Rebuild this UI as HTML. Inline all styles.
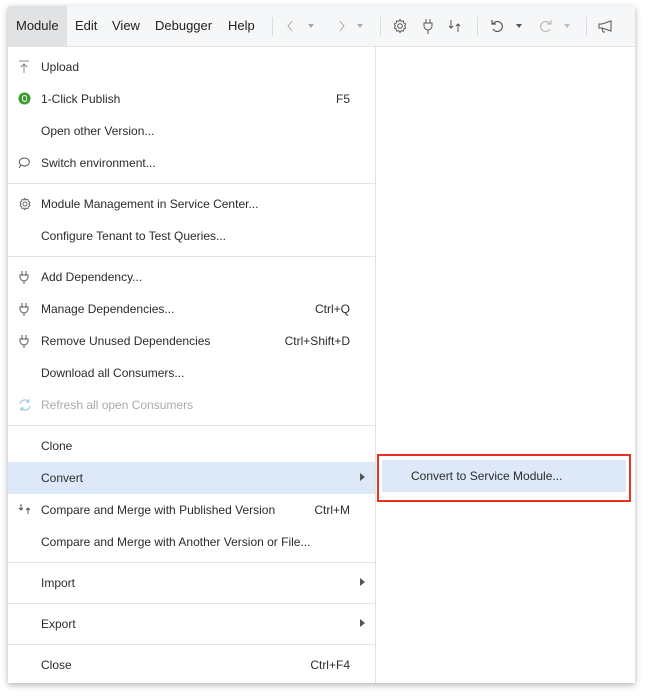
<!DOCTYPE html>
<html><head><style>
body{margin:0;width:650px;height:698px;background:#fff;font-family:"Liberation Sans",sans-serif;font-size:12px;color:#2b2b2b;position:relative;overflow:hidden}
.win{position:absolute;left:8px;top:6px;width:627px;height:677px;background:#fff;box-shadow:0 2px 6px rgba(0,0,0,.3)}
.bar{position:absolute;left:0;top:0;width:627px;height:40px;background:#f6f7f8;border-bottom:1px solid #e4e4e4}
.bar span{position:absolute;top:12px;font-size:13px;color:#222}
.mod{position:absolute;left:0;top:0;width:59px;height:40px;background:#e1e2e4}
.ic{position:absolute;color:#666;font-size:13px}
.vs{position:absolute;top:11px;width:1px;height:19px;background:#dcdcdc}
.menu{position:absolute;left:0;top:41px;width:367px;height:636px;border-right:1px solid #e2e2e2}
.r{position:absolute;left:0;width:367px;height:32px}
.r .t{position:absolute;left:33px;top:9px}
.r .k{position:absolute;right:25px;top:9px}
.r .a{position:absolute;right:10px;top:11px;width:0;height:0;border-left:5px solid #555;border-top:4px solid transparent;border-bottom:4px solid transparent}
.r svg{position:absolute;left:10px;top:9px}
.sep{position:absolute;left:0;width:367px;height:1px;background:#e3e3e3}
.hl{background:#dde9f8}
svg.b{position:absolute}
</style></head><body>
<div class="win">
<div class="bar">
<div class="mod"></div>
<span style="left:8px">Module</span><span style="left:67px">Edit</span><span style="left:104px">View</span><span style="left:147px">Debugger</span><span style="left:220px">Help</span>
<div class="vs" style="left:264px"></div>
<svg class="b" style="left:278px;top:14px" width="8" height="12"><path d="M6 1L2 6l4 5" fill="none" stroke="#aaa"/></svg>
<svg class="b" style="left:300px;top:18px" width="7" height="4"><path d="M0 0h6L3 4z" fill="#aaa"/></svg>
<svg class="b" style="left:330px;top:14px" width="8" height="12"><path d="M2 1l4 5-4 5" fill="none" stroke="#aaa"/></svg>
<svg class="b" style="left:349px;top:18px" width="7" height="4"><path d="M0 0h6L3 4z" fill="#aaa"/></svg>
<div class="vs" style="left:372px"></div>
<svg class="b" style="left:384px;top:12px" width="16" height="16" viewBox="0 0 16 16"><circle cx="8" cy="8" r="2.3" fill="none" stroke="#555"/><path d="M8 1.5l1.2 1.8 2.1-.5.5 2.1 1.8 1.2-1 1.9 1 1.9-1.8 1.2-.5 2.1-2.1-.5L8 14.5l-1.2-1.8-2.1.5-.5-2.1L2.4 9.9l1-1.9-1-1.9 1.8-1.2.5-2.1 2.1.5z" fill="none" stroke="#555"/></svg>
<svg class="b" style="left:414px;top:12px" width="12" height="16"><path d="M4 1v4M8 1v4M2 5h8v3a4 4 0 0 1-8 0zM6 12v4" fill="none" stroke="#555"/></svg>
<svg class="b" style="left:440px;top:13px" width="14" height="14"><path d="M3 1v8M1 7l2 2 2-2M10 13V5M8 7l2-2 2 2" fill="none" stroke="#555"/></svg>
<div class="vs" style="left:469px"></div>
<svg class="b" style="left:481px;top:12px" width="16" height="16"><path d="M4 6a5 5 0 1 1 0 5M3 2v4h4" fill="none" stroke="#555" stroke-width="1.2"/></svg>
<svg class="b" style="left:508px;top:18px" width="7" height="4"><path d="M0 0h6L3 4z" fill="#555"/></svg>
<svg class="b" style="left:530px;top:12px" width="16" height="16"><path d="M12 6a5 5 0 1 0 0 5M13 2v4H9" fill="none" stroke="#bbb" stroke-width="1.2"/></svg>
<svg class="b" style="left:556px;top:18px" width="7" height="4"><path d="M0 0h6L3 4z" fill="#bbb"/></svg>
<div class="vs" style="left:578px"></div>
<svg class="b" style="left:590px;top:13px" width="16" height="14"><path d="M1 5h3l9-3v10l-9-3H1zM4 9l1 4h2" fill="none" stroke="#555"/></svg>
</div>
<div class="menu">
<div class="r" style="top:4px"><svg width="12" height="14"><path d="M1 1h10M6 13V4M3 7l3-3 3 3" fill="none" stroke="#888"/></svg><span class="t">Upload</span></div>
<div class="r" style="top:36px"><svg width="13" height="13"><circle cx="6.5" cy="6.5" r="6" fill="#3c9d2c"/><rect x="4.5" y="3.5" width="4" height="6" rx="2" fill="none" stroke="#fff"/></svg><span class="t">1-Click Publish</span><span class="k">F5</span></div>
<div class="r" style="top:68px"><span class="t">Open other Version...</span></div>
<div class="r" style="top:100px"><svg width="14" height="13"><path d="M3 9a5 4 0 1 1 3 1M1 12l2-3 3 1" fill="none" stroke="#555"/></svg><span class="t">Switch environment...</span></div>
<div class="sep" style="top:136px"></div>
<div class="r" style="top:141px"><svg width="14" height="14" viewBox="0 0 16 16"><circle cx="8" cy="8" r="2.3" fill="none" stroke="#555"/><path d="M8 1.5l1.2 1.8 2.1-.5.5 2.1 1.8 1.2-1 1.9 1 1.9-1.8 1.2-.5 2.1-2.1-.5L8 14.5l-1.2-1.8-2.1.5-.5-2.1L2.4 9.9l1-1.9-1-1.9 1.8-1.2.5-2.1 2.1.5z" fill="none" stroke="#555"/></svg><span class="t">Module Management in Service Center...</span></div>
<div class="r" style="top:173px"><span class="t">Configure Tenant to Test Queries...</span></div>
<div class="sep" style="top:209px"></div>
<div class="r" style="top:214px"><svg width="12" height="14"><path d="M4 1v4M8 1v4M2 5h8v2a4 4 0 0 1-8 0zM6 11v3" fill="none" stroke="#555"/></svg><span class="t">Add Dependency...</span></div>
<div class="r" style="top:246px"><svg width="12" height="14"><path d="M4 1v4M8 1v4M2 5h8v2a4 4 0 0 1-8 0zM6 11v3" fill="none" stroke="#555"/></svg><span class="t">Manage Dependencies...</span><span class="k">Ctrl+Q</span></div>
<div class="r" style="top:278px"><svg width="12" height="14"><path d="M4 1v4M8 1v4M2 5h8v2a4 4 0 0 1-8 0zM6 11v3" fill="none" stroke="#555"/></svg><span class="t">Remove Unused Dependencies</span><span class="k">Ctrl+Shift+D</span></div>
<div class="r" style="top:310px"><span class="t">Download all Consumers...</span></div>
<div class="r" style="top:342px;color:#aaa"><svg width="14" height="14"><path d="M2 6a5 5 0 0 1 9-2M12 8a5 5 0 0 1-9 2M11 1v3H8M3 13v-3h3" fill="none" stroke="#8fc3e8"/></svg><span class="t">Refresh all open Consumers</span></div>
<div class="sep" style="top:378px"></div>
<div class="r" style="top:383px"><span class="t">Clone</span></div>
<div class="r hl" style="top:415px"><span class="t">Convert</span><span class="a"></span></div>
<div class="r" style="top:447px"><svg width="14" height="12"><path d="M3 1v6M1 5l2 2 2-2M10 11V5M8 7l2-2 2 2" fill="none" stroke="#555"/></svg><span class="t">Compare and Merge with Published Version</span><span class="k">Ctrl+M</span></div>
<div class="r" style="top:479px"><span class="t">Compare and Merge with Another Version or File...</span></div>
<div class="sep" style="top:515px"></div>
<div class="r" style="top:520px"><span class="t">Import</span><span class="a"></span></div>
<div class="sep" style="top:556px"></div>
<div class="r" style="top:561px"><span class="t">Export</span><span class="a"></span></div>
<div class="sep" style="top:597px"></div>
<div class="r" style="top:602px"><span class="t">Close</span><span class="k">Ctrl+F4</span></div>
</div>
</div>
<div style="position:absolute;left:377px;top:454px;width:250px;height:44px;border:2px solid #e8321f"></div>
<div style="position:absolute;left:382px;top:460px;width:244px;height:32px;background:#dde9f8"></div>
<div style="position:absolute;left:411px;top:469px;font-size:12px;color:#2b2b2b">Convert to Service Module...</div>
</body></html>
